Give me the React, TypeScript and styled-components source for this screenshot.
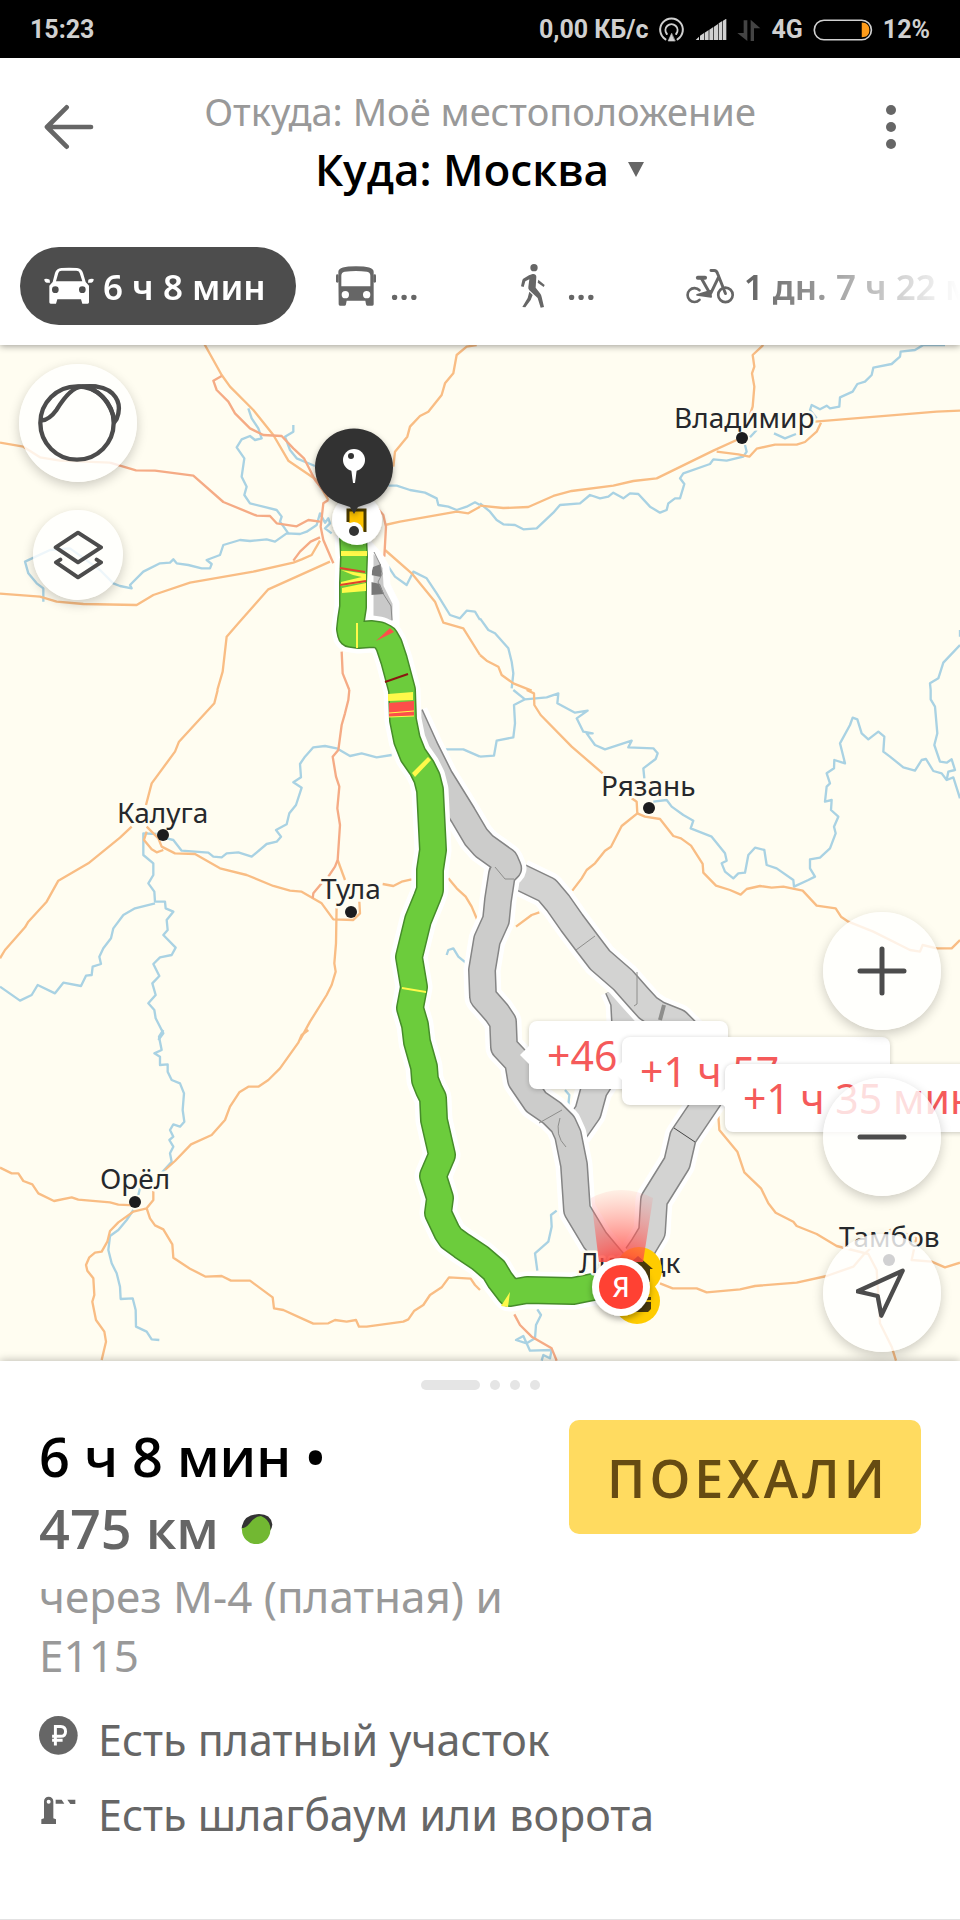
import React from 'react';
import styled, { createGlobalStyle, css } from 'styled-components';

const ui = '"Noto Sans", "Open Sans", sans-serif';
const heading = '"Open Sans", "Noto Sans", sans-serif';

const GlobalStyle = createGlobalStyle`
  *, *::before, *::after { box-sizing: border-box; }
  body { margin: 0; background: #fff; font-family: ${ui}; color: #000; }
  button { margin: 0; padding: 0; border: 0; background: none; font: inherit; color: inherit; cursor: pointer; }
  svg { display: block; flex: none; }
`;

const Page = styled.div`
  display: flex;
  flex-direction: column;
  min-height: 100vh;
`;

/* ---------- status bar ---------- */

const StatusBar = styled.div`
  display: flex;
  align-items: center;
  gap: 10px;
  height: 58px;
  padding: 2px 30px 0;
  background: #000;
  color: #d0d0d0;
  font: 700 25px/30px Roboto, sans-serif;
  white-space: nowrap;
`;

const Clock = styled.span`
  margin-right: auto;
`;

/* ---------- header ---------- */

const Header = styled.header`
  position: relative;
  z-index: 2;
  padding: 25px 0 20px;
  background: #fff;
  box-shadow: 0 1px 7px rgba(0, 0, 0, 0.4);
`;

const RouteBar = styled.div`
  display: flex;
  align-items: flex-start;
  justify-content: space-between;
  padding: 0 35px;
`;

const IconButton = styled.button`
  display: grid;
  place-items: center;
  width: 68px;
  height: 88px;
`;

const Endpoints = styled.div`
  display: flex;
  flex-direction: column;
  align-items: center;
`;

const FromButton = styled.button`
  color: #999;
  font-size: 38px;
  line-height: 56px;
`;

const ToButton = styled.button`
  display: flex;
  align-items: center;
  gap: 18px;
  font-family: ${heading};
  font-size: 44px;
  font-weight: 600;
  line-height: 60px;
`;

const Tabs = styled.nav`
  display: flex;
  gap: 11px;
  margin-top: 48px;
  padding-left: 20px;
  overflow: hidden;
  mask-image: linear-gradient(to right, #000 calc(100% - 210px), transparent 100%);
`;

const Tab = styled.button<{ $active?: boolean }>`
  display: flex;
  flex: none;
  align-items: center;
  gap: 9px;
  min-width: 166px;
  height: 78px;
  padding: 0 30px 0 24px;
  border-radius: 39px;
  color: #666;
  font-size: 35px;
  font-weight: 600;
  white-space: nowrap;
  ${(p) => p.$active && css`background: #4d4d4d; color: #fff;`}
`;

/* ---------- map ---------- */

const MapArea = styled.main`
  position: relative;
  flex: 1 0 600px;
  overflow: hidden;
  background: #fffdf1;
`;

const MapDrawing = styled.svg`
  position: absolute;
  inset: 0;
  width: 100%;
  height: 100%;
`;

const Bubble = styled.button<{ $x: number; $y: number }>`
  position: absolute;
  left: calc(50% + ${(p) => p.$x}px);
  top: calc(50% + ${(p) => p.$y}px);
  height: 68px;
  padding: 0 18px;
  border-radius: 8px;
  background: #fff;
  box-shadow: 0 1px 5px rgba(0, 0, 0, 0.22);
  color: #f55a5a;
  font-size: 41px;
  line-height: 68px;
  white-space: nowrap;
  &::before {
    content: '';
    position: absolute;
    left: -9px;
    top: 24px;
    border: 10px solid transparent;
    border-left: 0;
    border-right-color: #fff;
  }
`;

const LeftControls = styled.div`
  position: absolute;
  top: 19px;
  left: 19px;
  display: flex;
  flex-direction: column;
  align-items: center;
  gap: 28px;
`;

const RightControls = styled.div`
  position: absolute;
  right: 19px;
  bottom: 9px;
  display: flex;
  flex-direction: column;
  gap: 38px;
`;

const ZoomGroup = styled.div`
  display: flex;
  flex-direction: column;
  gap: 48px;
`;

const RoundButton = styled.button<{ $size?: number }>`
  display: grid;
  place-items: center;
  width: ${(p) => p.$size ?? 118}px;
  height: ${(p) => p.$size ?? 118}px;
  border-radius: 50%;
  background: rgba(255, 255, 255, 0.8);
  box-shadow: 0 4px 12px rgba(0, 0, 0, 0.2);
`;

/* ---------- bottom sheet ---------- */

const Sheet = styled.section`
  position: relative;
  z-index: 2;
  padding: 19px 39px 67px;
  border-bottom: 1px solid #e2e2e2;
  background: #fff;
  box-shadow: 0 -1px 8px rgba(0, 0, 0, 0.25);
`;

const Pager = styled.div`
  display: flex;
  justify-content: center;
  gap: 10px;
`;

const PagerMark = styled.span<{ $current?: boolean }>`
  width: ${(p) => (p.$current ? 59 : 10)}px;
  height: 10px;
  border-radius: 5px;
  background: #e5e5e5;
`;

const Summary = styled.div`
  display: flex;
  align-items: flex-start;
  justify-content: space-between;
  gap: 40px;
  margin-top: 30px;
`;

const SummaryText = styled.div`
  flex: 1;
`;

const Title = styled.h1`
  margin: 0 0 3px;
  font-family: ${heading};
  font-size: 54px;
  font-weight: 600;
  line-height: 72px;
`;

const Distance = styled.span`
  display: flex;
  align-items: center;
  gap: 22px;
  color: #666;
`;

const Via = styled.p`
  margin: 0;
  color: #999;
  font-size: 44px;
  line-height: 59px;
`;

const GoButton = styled.button`
  min-width: 352px;
  height: 114px;
  padding: 0 28px 0 34px;
  border-radius: 10px;
  background: #ffdb60;
  color: #664b12;
  font-family: ${heading};
  font-size: 52px;
  font-weight: 600;
  letter-spacing: 4px;
`;

const Notes = styled.ul`
  margin: 17px 0 0;
  padding: 0;
  list-style: none;
`;

const Note = styled.li`
  display: flex;
  gap: 20px;
  color: #666;
  font-size: 43px;
  line-height: 75px;
`;

const NoteIcon = styled.span`
  display: grid;
  place-items: center;
  width: 39px;
  height: 66px;
`;

/* ---------- icons ---------- */

const stroke = { fill: 'none', strokeLinecap: 'round', strokeLinejoin: 'round' } as const;

const HotspotIcon = () => (
  <svg width="27" height="26" viewBox="552 48 80 78" stroke="#d0d0d0" {...stroke}>
    <path d="M574 115A34 34 0 1 1 610 115" strokeWidth="6" />
    <path d="M578 99A18 18 0 1 1 606 99" strokeWidth="6" />
    <path d="M592 98L582 120H602Z" fill="#d0d0d0" strokeWidth="2" />
  </svg>
);

const SignalIcon = () => (
  <svg width="32" height="22" viewBox="670 56 96 66" fill="#d0d0d0">
    <path d="M672 119L682 109V119ZM685 106L697 98V119H685ZM699 97L711 89V119H699ZM713 88L725 80V119H713ZM727 79L739 71V119H727ZM741 69L752 62V119H741ZM754 61L764 55V119H754Z" />
  </svg>
);

const DataIcon = () => (
  <svg width="24" height="23" viewBox="796 52 72 69" fill="#444">
    <path d="M816 56H827V118L797 94H816ZM837 118V54L866 80H847V118Z" />
  </svg>
);

const BatteryIcon = () => (
  <svg width="60" height="24" viewBox="1015 52 181 71">
    <rect x="1019" y="58" width="172" height="59" rx="29" fill="none" stroke="#d0d0d0" strokeWidth="5" />
    <path d="M1162 65C1178 65 1185 75 1185 88C1185 101 1178 109 1162 109Z" fill="#ff9c1a" />
  </svg>
);

const BackIcon = () => (
  <svg width="50" height="46" viewBox="131 312 150 138" stroke="#666" strokeWidth="14" {...stroke}>
    <path d="M272 381H140M199 322L140 381L199 440" />
  </svg>
);

const MoreIcon = () => (
  <svg width="12" height="46" viewBox="0 0 12 46" fill="#666">
    <circle cx="6" cy="6" r="5" />
    <circle cx="6" cy="23" r="5" />
    <circle cx="6" cy="40" r="5" />
  </svg>
);

const CaretIcon = () => (
  <svg width="18" height="15" viewBox="0 0 18 15" fill="#666">
    <path d="M1 0H17L9 15Z" />
  </svg>
);

const CarIcon = () => (
  <svg width="50" height="38" viewBox="132 800 150 114" fill="#fff">
    <path
      fillRule="evenodd"
      d="M148 856L158 845L165 818Q169 804 184 803Q207 801 231 803Q245 804 249 818L257 845L267 856V906Q267 910 263 910H247L243 897H172L168 910H152Q148 910 148 906ZM168 843L175 818Q177 811 185 811H229Q237 811 239 818L247 843ZM156 868A10 10 0 1 0 176 868A10 10 0 1 0 156 868ZM237 868A10 10 0 1 0 257 868A10 10 0 1 0 237 868Z"
    />
    <path d="M133 836Q141 833 149 838L150 847H140Q133 846 133 836ZM281 836Q273 833 265 838L264 847H274Q281 846 281 836Z" />
  </svg>
);

const BusIcon = () => (
  <svg width="50" height="42" viewBox="993 794 150 126" fill="#666">
    <path
      fillRule="evenodd"
      d="M1015 814Q1016 798 1068 798Q1120 798 1121 814V912Q1121 916 1117 916H1102Q1098 916 1098 912L1096 901H1040L1038 912Q1038 916 1034 916H1020Q1016 916 1016 912ZM1024 826Q1024 815 1034 814Q1068 810 1101 814Q1111 815 1111 826V858H1024ZM1025 883A11 11 0 1 0 1047 883A11 11 0 1 0 1025 883ZM1089 883A11 11 0 1 0 1111 883A11 11 0 1 0 1089 883Z"
    />
    <rect x="1008" y="822" width="8" height="25" rx="4" />
    <rect x="1120" y="822" width="8" height="25" rx="4" />
  </svg>
);

const WalkIcon = () => (
  <svg width="50" height="46" viewBox="84 788 150 138" fill="#666">
    <circle cx="162" cy="802" r="11" />
    <path d="M147 825L158 821Q168 820 169 829L167 862L180 879Q184 884 185 890L192 920L182 922L173 893L148 870Q144 866 145 860L148 837L136 843L131 860L123 858L127 840Q128 836 132 834Z" />
    <path d="M175 838L194 854L191 860L173 847Z" />
    <path d="M148 874L158 884L152 899L136 921L127 920L143 893Z" />
  </svg>
);

const BikeIcon = () => (
  <svg width="50" height="38" viewBox="613 800 152 114" stroke="#666" {...stroke}>
    <path d="M657 870A21 21 0 1 0 657 899" strokeWidth="8" />
    <circle cx="736" cy="884" r="22" strokeWidth="8" />
    <path d="M652 832H674" strokeWidth="12" />
    <path d="M663 834L688 878M692 810H702Q709 810 712 819L736 880M714 832L692 878" strokeWidth="9" />
    <path d="M650 884L690 872L692 890Z" fill="#666" strokeWidth="6" />
  </svg>
);

const CompassIcon = () => (
  <svg width="88" height="82" viewBox="106 125 264 246" stroke="#4c4c4c" strokeWidth="13" {...stroke}>
    <circle cx="235" cy="248" r="110" />
    <path d="M130 240Q152 238 174 208Q215 141 250 139Q312 132 342 160Q372 190 354 236L347 246" />
    <path d="M240 138H290M275 144Q325 165 347 235" />
  </svg>
);

const LayersIcon = () => (
  <svg width="50" height="50" viewBox="160 570 150 150" stroke="#4c4c4c" strokeWidth="12" {...stroke}>
    <path d="M235 578L304 622L235 667L168 622ZM182 659L169 667L235 712L304 667L291 659" />
  </svg>
);

const PlusIcon = () => (
  <svg width="50" height="50" viewBox="0 0 50 50" stroke="#4c4c4c" strokeWidth="5" {...stroke}>
    <path d="M3 25H47M25 3V47" />
  </svg>
);

const MinusIcon = () => (
  <svg width="50" height="50" viewBox="0 0 50 50" stroke="#4c4c4c" strokeWidth="5" {...stroke}>
    <path d="M3 25H47" />
  </svg>
);

const LocateIcon = () => (
  <svg width="52" height="52" viewBox="1126 720 156 156" stroke="#4c4c4c" strokeWidth="13" {...stroke}>
    <path d="M1266 731L1202 866L1191 807L1131 793Z" />
  </svg>
);

const TrafficIcon = () => (
  <svg width="32" height="31" viewBox="722 424 97 93">
    <path d="M724 470Q728 430 770 427Q812 424 817 458Q816 470 810 477Z" fill="#333" />
    <path d="M724 470Q736 470 750 453Q766 432 784 433Q812 445 811 475A43 43 0 0 1 725 475Z" fill="#72b832" />
  </svg>
);

const RubleIcon = () => (
  <svg width="39" height="39" viewBox="86 43 119 119">
    <circle cx="145" cy="102" r="59" fill="#666" />
    <path d="M136 133V75H152Q167 76 167 90Q167 105 152 105H126M126 117H158" stroke="#fff" strokeWidth="9" fill="none" />
  </svg>
);

const BarrierIcon = () => (
  <svg width="35" height="28" viewBox="94 280 105 84" fill="#666">
    <path
      fillRule="evenodd"
      d="M95 364V350L103 347V296A14 14 0 0 1 131 296V347L139 350V364ZM111 297A6 6 0 1 0 123 297A6 6 0 1 0 111 297Z"
    />
    <path d="M138 291H156L164 303H138ZM173 291H197V304H182Z" />
  </svg>
);

/* ---------- map data ---------- */

type Tile = { x: number; y: number; roads: string[]; highways?: string[]; rivers: string[] };

/* Every tile holds its lines in tile units, three to a map unit. */
const tiles: Tile[] = [
  {
    x: 0,
    y: 340,
    roads: [
      '612,10 665,105 690,140 760,210 820,285 865,362 950,420 985,480',
      '1430,15 1400,20 1370,45 1360,100 1335,130 1325,165 1285,215 1260,228 1230,260 1222,290 1185,335 1180,380',
      '0,308 70,320 120,352 180,362 330,368',
      '0,761 120,770 170,785 250,792 410,795 460,765 570,728 760,695 880,668 905,658 935,645 960,602',
      '990,665 805,748 715,850 680,890 668,995 652,1050',
      '1155,555 1200,545 1370,515 1405,520 1440,500',
      '1155,630 1235,700 1305,785 1330,848 1390,865 1440,945',
    ],
    highways: [
      '665,108 640,122 650,150 685,185 705,220 750,265 790,285 845,288 880,325 912,355 945,420 985,470',
      '330,368 408,391 465,392 580,407 670,486 770,527 810,528 830,550 890,559 925,540 960,545',
      '960,592 932,605 900,635 880,662',
      '985,480 970,490 962,560 970,600 1000,670',
      '1110,480 1150,525 1158,560 1153,650',
      '1025,935 1028,1000 1048,1050',
    ],
    rivers: [
      '745,205 755,235 775,265 785,295 765,300 750,288 725,298 710,322 733,355 725,410 740,440 733,465 750,490 830,510 845,530 840,545 865,580',
      '880,255 880,275 855,290 870,330 890,355 945,378',
      '130,785 130,745 110,730 85,700 75,665 150,630 210,625 300,690 340,730 360,738 395,745 390,735 430,695 480,670 510,668 520,658 530,670 565,675 605,685 630,685 635,672 620,660 660,645 670,615 720,600 750,603 800,598 825,605 860,580 900,582 920,575 950,555 960,520 975,548 985,535 990,550 975,565 995,580',
      '1165,437 1190,437 1230,450 1275,458 1310,475 1315,495 1345,500 1370,510 1400,500 1425,487 1440,495',
      '1165,680 1185,710 1220,735 1240,695 1280,715 1310,760 1350,825 1380,835 1400,812 1425,815 1440,840',
    ],
  },
  {
    x: 480,
    y: 340,
    roads: [
      '850,15 818,45 823,80 816,100 823,140 818,200 808,230',
      '0,497 70,504 145,501 220,468 275,453 400,437 460,423 530,415 700,332 770,300',
      '710,335 775,343 808,350 830,326 885,314 950,314 975,306 1010,275 1023,248',
      '1005,245 1370,215 1440,212',
      '0,945 20,962 55,980 65,1005 100,1030 155,1052',
    ],
    rivers: [
      '1395,15 1330,15 1305,30 1262,35 1260,50 1235,72 1180,83 1175,105 1155,125 1132,132 1118,155 1080,172 1078,200 1050,205 1040,197 1020,208 995,195 990,210 1010,235',
      '830,270 810,292',
      '882,280 915,295 948,282',
      '795,315 800,335 790,350 740,362 700,358 690,372 610,400 600,415 613,432 600,475 585,475 565,490 560,510 540,518 510,500 475,462 450,460 430,475 400,458 385,470 360,475 330,465 300,490 240,495 220,518 170,565 130,568 105,555 70,553 50,540 30,515 0,490',
      '0,835 25,870 45,880 85,925 95,965 100,1000 95,1045',
      '1440,915 1390,968 1375,1015 1350,1030 1352,1050',
      '1440,870 1440,890',
    ],
  },
  {
    x: 0,
    y: 690,
    roads: [
      '653,0 643,40 537,155 525,185 455,280 438,345',
      '395,410 360,443 265,520 175,572 140,635 85,695 75,712 15,780 0,805',
      '440,410 475,445 485,470 525,490 585,492 660,535 740,555 820,588 870,602 905,605 965,640 1000,688 1060,690 1080,670 1078,635',
      '440,425 432,450 455,478 470,487 490,480',
      '1013,510 1035,570',
      '1010,640 1008,760 1003,820 1007,845 995,885 980,915 930,995 900,1050',
      '1148,582 1180,588 1205,575 1235,568',
      '1345,565 1370,595 1397,620 1415,650 1432,690',
    ],
    highways: [
      '1048,0 1045,30 1035,70 1025,105 1015,180 998,200 1008,260 1018,290 1012,355 1020,405 1013,510 1005,530 985,560',
      '965,580 940,610 938,625',
    ],
    rivers: [
      '1175,195 1130,202 1085,190 1050,198 1010,175 975,168 940,172 915,200 900,222 903,262 880,277 905,293 888,345 868,370 860,403 828,420 843,440 830,455 800,462 755,500 715,487 680,490 665,502 640,500 625,488 545,482 520,450 500,445',
      '470,432 430,430 430,495 460,520 460,555 445,580 463,605 465,635 495,635 497,655 520,665 500,690 503,720 490,735 527,773 515,795 480,802 460,822 478,858 457,880 467,915 445,940 463,960 467,985 490,1030 475,1050',
      '465,640 405,655 370,675 340,715 333,745 310,775 298,800 303,822 278,830 275,855 258,857 243,888 190,878 165,910 113,885 95,915 60,932 0,890',
      '1330,178 1390,178 1440,200',
      '1340,795 1345,780 1360,775 1375,800 1397,818',
    ],
  },
  {
    x: 480,
    y: 690,
    roads: [
      '140,0 162,10 163,45 182,75 275,170 368,250',
      '455,325 470,335 472,370 425,408 393,470 375,482 345,520 320,540 305,565 277,602',
      '472,370 495,380 540,387 580,438 603,445 633,467 668,522 670,548 708,587 750,600 782,614 800,597 840,588 875,593 910,590 968,602 1010,647 1067,655 1083,680 1105,695 1180,725 1290,780 1320,785 1328,765 1370,775 1415,775 1440,750',
      '178,667 155,675 108,710',
    ],
    rivers: [
      '0,200 42,197 50,152 100,142 105,100 102,45 135,28 200,22 235,10 232,40 285,68 323,62 290,85 310,125 338,130 320,130 345,165 375,178 455,152 445,172 520,175 533,190 527,207 490,235 493,265',
      '100,0 135,28',
      '520,335 560,330 575,350 610,375 640,392 632,415 695,440 735,490 740,512 725,520 735,545 760,565 775,550 795,548 805,495 825,473 853,480 860,525 890,535 940,570 942,590 985,570 1005,560 990,535 990,508 1020,503 1050,475 1067,430 1062,410 1075,380 1053,360 1055,330 1035,335 1040,290 1050,280 1040,250 1062,235 1063,210 1095,220 1080,160 1110,105 1118,83 1132,88 1145,130 1165,148 1195,125 1213,140 1210,185 1230,200 1270,232 1305,242 1325,210 1338,207 1360,243 1385,250 1400,270 1420,262 1440,325',
      '1352,0 1352,28 1365,50 1372,130 1363,165 1380,215 1400,218 1415,208 1425,240 1405,245 1400,270',
    ],
  },
  {
    x: 0,
    y: 1030,
    roads: [
      '925,0 905,15 895,38 840,115 805,150 775,170 745,170 718,187 690,230 675,270 635,315 573,343 525,393 495,420',
      '460,480 460,510 440,535 400,545 355,577 330,603 322,635 305,665 285,668 268,682 258,705 262,722 280,745 283,795 277,815 288,870 313,905 318,935 305,990',
      '0,413 35,430 55,430 70,453 97,463 115,490 162,513 215,502 235,509 330,517 355,524 405,526',
      '440,535 450,565 465,586 490,598 517,643 520,683 570,716 617,740 665,738 693,752 750,752 818,802 822,835 850,840 905,865 940,881 985,880 1005,870 1040,875 1068,870 1077,890 1100,890 1210,875 1225,868 1243,842 1270,825 1290,795 1325,772 1347,742 1412,746 1425,765 1440,780',
    ],
    rivers: [
      '490,0 477,20 485,60 463,70 480,80 480,105 503,103 503,125 515,150 540,160 552,190 548,240 553,275 540,290 520,283 510,300 520,320 508,330 520,350 510,370 515,395 485,428',
      '420,475 415,495',
      '400,540 380,570 355,600 330,618 325,660 335,700 350,730 360,770 362,807 398,805 407,840 408,890 440,905 455,928 478,930',
    ],
  },
  {
    x: 480,
    y: 1030,
    roads: [
      '715,258 718,300 772,365 793,427 843,475 865,520 887,548 940,575 950,588 1010,612 1070,648 1165,672 1190,720 1200,880 1235,950 1248,992',
      '540,760 578,775 650,775 680,787 780,778 825,768 950,758 1040,738 1120,710 1150,675 1230,600 1310,620 1295,690 1355,695 1395,712 1440,698',
    ],
    highways: ['103,853 120,885 155,920 215,955 230,992'],
    rivers: [
      '230,542 213,555 215,590 205,635 165,670 172,722',
      '172,838 183,855 168,885 165,925 140,940 108,930 130,918 150,962 215,960 210,985 190,975 185,992',
      '255,180 268,195 265,225',
    ],
  },
];

const cities = [
  { name: 'Владимир', x: 674, y: 428, dot: [742, 438] },
  { name: 'Калуга', x: 117, y: 823, dot: [163, 835] },
  { name: 'Тула', x: 321, y: 899, dot: [351, 912] },
  { name: 'Рязань', x: 601, y: 796, dot: [649, 808] },
  { name: 'Орёл', x: 100, y: 1189, dot: [135, 1202] },
  { name: 'Липецк', x: 579, y: 1273, dot: null },
  { name: 'Тамбов', x: 839, y: 1247, dot: [889, 1260] },
];

const mainRoute =
  '353,535 354,557 353,583 353,607 351,620 350,629 351,634 358,635 372,634 379,635 385,638 389,645 394,660 402,690 403,720 407,740 413,755 422,768 427,778 430,790 433,850 430,870 430,890 427,898 418,920 409,957 414,987 410,1008 415,1025 417,1042 424,1067 425,1080 429,1090 433,1098 434,1120 442,1155 433,1176 440,1198 438,1213 447,1232 451,1238 462,1246 480,1258 494,1270 500,1280 510,1293 527,1290 573,1291 593,1287 620,1282';

const alternatives = [
  '618,988 624,1002 626,1040 594,1090 588,1112 574,1132',
  '520,877 547,890 558,903 572,923 587,943 600,960 623,980 638,997 648,1008 657,1014 677,1022 725,1070 710,1097 683,1137 677,1163 654,1200 652,1232 643,1247 627,1270',
  '410,715 425,748 440,778 463,815 476,837 484,846 505,861 508,868 502,874 498,900 496,920 487,940 482,970 483,997 497,1013 503,1022 504,1047 518,1062 521,1080 536,1102 552,1113 563,1124 568,1135 574,1165 577,1210 595,1240 620,1270',
];

const Route = ({ points, fill, edge }: { points: string; fill: string; edge: string }) => (
  <g fill="none" strokeLinejoin="round">
    <polyline points={points} stroke="#fff" strokeWidth="37" />
    <polyline points={points} stroke={edge} strokeWidth="28" />
    <polyline points={points} stroke={fill} strokeWidth="25" />
  </g>
);

const Traffic = () => (
  <g>
    <g fill="#fff94a">
      <path d="M341 551H367V556H341Z" />
      <path d="M341 570L366 574V578L353 575Z" />
      <path d="M341 582L366 576V582L341 586Z" />
      <path d="M342 588L366 583V591L342 593Z" />
      <path d="M388 694L413 692V700L388 701Z" />
      <path d="M412 773L428 757L431 760L415 777Z" />
      <path d="M402 987L426 991V993L402 989Z" />
      <path d="M510 1292L508 1307L501 1306Z" />
    </g>
    <path d="M357 623V648" stroke="#fff94a" strokeWidth="2" />
    <path d="M389 703L414 701V716L389 717Z" fill="#fc4f4a" />
    <path d="M389 713L414 711M389 717L414 716" stroke="#fff94a" strokeWidth="1" />
    <path d="M376 641L390 628L394 632Z" fill="#fc4f4a" />
    <path d="M340 568L365 572M340 585L366 581" stroke="#e0412c" strokeWidth="2" />
    <path d="M385 682L408 674" stroke="#8a1710" strokeWidth="2" />
  </g>
);

const Map = () => (
  <MapDrawing viewBox="0 345 960 1016" preserveAspectRatio="xMidYMid slice" role="img" aria-label="Карта">
    <defs>
      <radialGradient id="beam" gradientUnits="userSpaceOnUse" cx="621" cy="1290" r="102">
        <stop offset="0.2" stopColor="#ff3b30" />
        <stop offset="0.4" stopColor="#ff4d48" stopOpacity="0.75" />
        <stop offset="1" stopColor="#ff7d7d" stopOpacity="0.08" />
      </radialGradient>
      <filter id="lift" x="-30%" y="-30%" width="160%" height="160%">
        <feDropShadow dx="0" dy="3" stdDeviation="3" floodOpacity="0.35" />
      </filter>
    </defs>

    {tiles.map((t) => (
      <g key={`${t.x}-${t.y}`} transform={`translate(${t.x} ${t.y}) scale(0.33333)`} fill="none" strokeWidth="7" strokeLinejoin="round">
        {t.rivers.map((p) => <polyline key={p} points={p} stroke="#a9d2e3" />)}
        {t.roads.map((p) => <polyline key={p} points={p} stroke="#f9bd84" />)}
        {t.highways?.map((p) => <polyline key={p} points={p} stroke="#f5ab85" />)}
      </g>
    ))}

    {alternatives.map((p, i) => (
      <Route key={p} points={p} fill={i === 2 ? '#cccccb' : '#d3d3d2'} edge="#858585" />
    ))}
    <g stroke="#8e8e8c" strokeWidth="1" fill="none">
      <path d="M576 950L595 936M637 972V1004L634 1006M539 1123L562 1110M495 867L505 879L514 879M560 1118Q554 1135 566 1147" />
      <path d="M674 1128L695 1142" stroke="#444" />
      <path d="M664 1005L660 1020" strokeWidth="4" />
    </g>

    <path d="M370 545L379 555L386 567L387 585L396 603L396 625L370 622Z" fill="#c9c9c9" stroke="#fff" strokeWidth="7" strokeLinejoin="round" />
    <path d="M373 567L381 564L381 577L371 575ZM371 582L380 584L384 594L371 595Z" fill="#777" />
    <path d="M374 552L380 564L382 574L378 582L384 595L391 606L392 620" fill="none" stroke="#8a8a8a" strokeWidth="1" />

    <Route points={mainRoute} fill="#6ccc3c" edge="#468c2a" />
    <Traffic />

    <g fontFamily={ui} fontSize="28" fill="#26282c" stroke="#fffdf1" strokeWidth="5" strokeLinejoin="round" paintOrder="stroke">
      {cities.map((c) => <text key={c.name} x={c.x} y={c.y}>{c.name}</text>)}
    </g>
    {cities.map((c) => c.dot && <circle key={c.name} cx={c.dot[0]} cy={c.dot[1]} r="6" fill="#1c1c1e" />)}

    <circle cx="639" cy="1270" r="23" fill="#ffcc00" />
    <circle cx="637" cy="1301" r="23" fill="#ffcc00" />
    <path d="M638 1256L653 1269H650V1282H626V1269H623ZM630 1302H651V1309L648 1312H630ZM640 1297H651V1300H640Z" fill="#4a3a0c" />
    <path d="M591 1198Q621 1182 653 1198L643 1262H599Z" fill="url(#beam)" />
    <circle cx="621" cy="1287" r="29" fill="#fff" filter="url(#lift)" />
    <circle cx="621" cy="1287" r="22" fill="#ff4133" />
    <text x="621" y="1297" fontFamily={ui} fontSize="27" fontWeight="500" fill="#fff" textAnchor="middle">Я</text>

    <circle cx="357" cy="520" r="25" fill="#fff" filter="url(#lift)" />
    <path d="M348 522V510H365V532" fill="#ffc400" stroke="#4a3a00" strokeWidth="3" />
    <circle cx="354" cy="531" r="9" fill="#fff" />
    <circle cx="354" cy="531" r="5" fill="#333" />
    <g filter="url(#lift)">
      <path d="M354 514L350 507Q344 505 338 503A39 39 0 1 1 370 503Q364 505 358 507Z" fill="#333" />
    </g>
    <circle cx="354" cy="460" r="11" fill="#fff" />
    <path d="M351 468H357L355 483H353Z" fill="#fff" />
    <circle cx="351" cy="456" r="3" fill="#333" />
  </MapDrawing>
);

/* ---------- page ---------- */

const bubbles = [
  { text: '+46 мин', x: 49, y: 168 },
  { text: '+1 ч 57 мин', x: 142, y: 184 },
  { text: '+1 ч 35 мин', x: 245, y: 211 },
];

export default function App() {
  return (
    <Page>
      <GlobalStyle />
      <StatusBar>
        <Clock>15:23</Clock>
        <span>0,00 КБ/с</span>
        <HotspotIcon />
        <SignalIcon />
        <DataIcon />
        <span>4G</span>
        <BatteryIcon />
        <span>12%</span>
      </StatusBar>

      <Header>
        <RouteBar>
          <IconButton aria-label="Назад"><BackIcon /></IconButton>
          <Endpoints>
            <FromButton>Откуда: Моё местоположение</FromButton>
            <ToButton>Куда: Москва <CaretIcon /></ToButton>
          </Endpoints>
          <IconButton aria-label="Меню"><MoreIcon /></IconButton>
        </RouteBar>
        <Tabs>
          <Tab $active><CarIcon />6 ч 8 мин</Tab>
          <Tab aria-label="Транспорт"><BusIcon />...</Tab>
          <Tab aria-label="Пешком"><WalkIcon />...</Tab>
          <Tab><BikeIcon />1 дн. 7 ч 22 мин</Tab>
        </Tabs>
      </Header>

      <MapArea>
        <Map />
        {bubbles.map((b) => <Bubble key={b.text} $x={b.x} $y={b.y}>{b.text}</Bubble>)}
        <LeftControls>
          <RoundButton aria-label="Пробки"><CompassIcon /></RoundButton>
          <RoundButton $size={90} aria-label="Слои"><LayersIcon /></RoundButton>
        </LeftControls>
        <RightControls>
          <ZoomGroup>
            <RoundButton aria-label="Приблизить"><PlusIcon /></RoundButton>
            <RoundButton aria-label="Отдалить"><MinusIcon /></RoundButton>
          </ZoomGroup>
          <RoundButton aria-label="Где я"><LocateIcon /></RoundButton>
        </RightControls>
      </MapArea>

      <Sheet>
        <Pager>
          <PagerMark $current />
          <PagerMark />
          <PagerMark />
          <PagerMark />
        </Pager>
        <Summary>
          <SummaryText>
            <Title>
              6 ч 8 мин •
              <Distance>475 км <TrafficIcon /></Distance>
            </Title>
            <Via>через М-4 (платная) и Е115</Via>
          </SummaryText>
          <GoButton>ПОЕХАЛИ</GoButton>
        </Summary>
        <Notes>
          <Note><NoteIcon><RubleIcon /></NoteIcon>Есть платный участок</Note>
          <Note><NoteIcon><BarrierIcon /></NoteIcon>Есть шлагбаум или ворота</Note>
        </Notes>
      </Sheet>
    </Page>
  );
}
